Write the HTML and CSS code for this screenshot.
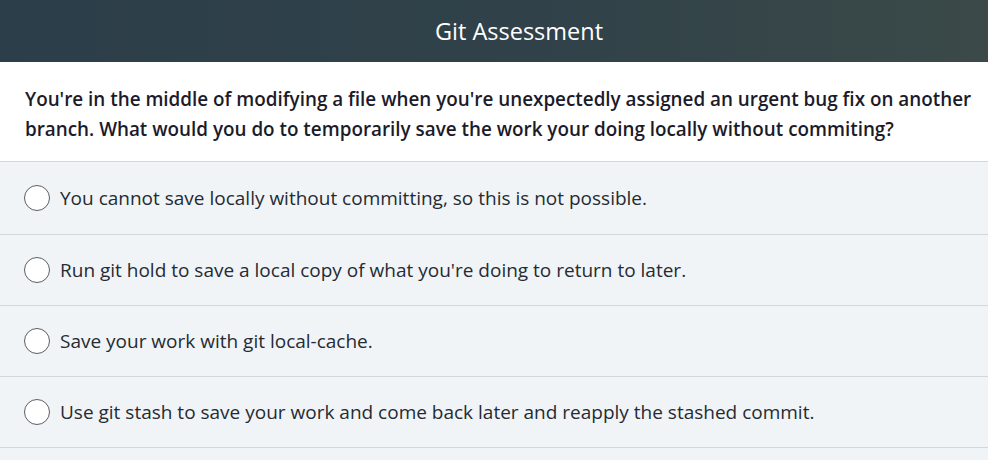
FILE: index.html
```html
<!DOCTYPE html>
<html>
<head>
	<meta charset="utf-8">
	<meta name="viewport" content="width=device-width, initial-scale=1">
	<title>Git Assessment</title>
	<link rel="stylesheet" href="styles.css">
</head>
<body>
	<header class="topbar">
		<h1>Git Assessment</h1>
	</header>

	<main class="quiz">
		<p class="question">You're in the middle of modifying a file when you're unexpectedly assigned an urgent bug fix on another branch. What would you do to temporarily save the work your doing locally without commiting?</p>

		<!-- answers, one label per row -->
		<ul class="answers">
			<li><label class="answer"><input type="radio" name="answer"><span class="dot"></span>You cannot save locally without committing, so this is not possible.</label></li>
			<li><label class="answer"><input type="radio" name="answer"><span class="dot"></span>Run git hold to save a local copy of what you're doing to return to later.</label></li>
			<li><label class="answer"><input type="radio" name="answer"><span class="dot"></span>Save your work with git local-cache.</label></li>
			<li><label class="answer"><input type="radio" name="answer"><span class="dot"></span>Use git stash to save your work and come back later and reapply the stashed commit.</label></li>
		</ul>
	</main>
</body>
</html>
```

FILE: styles.css
```css
* {
  box-sizing: border-box;
  padding: 0;
  margin: 0;
}
body {
  background: #f1f4f7;
  color: #212529;
  font-family: "Open Sans", "Noto Sans", sans-serif;
}

/* dark bar on top */
.topbar {
  height: 62px;
  display: flex;
  justify-content: center;
  align-items: center;
  padding-left: 50px;
  background: linear-gradient(90deg, #2c3e49, #314249 60%, #3b4a48);
  color: #fff;
}
.topbar h1 {
  font-size: 23.5px;
  font-weight: 400;
}

.question {
  background: #fff;
  padding: 22px 8px 17px 25px;
  font-size: 18.85px;
  line-height: 30px;
  font-weight: 600;
  color: #1b1b2a;
  border-bottom: 1px solid #d4d6d8;
}

.answers {
  list-style: none;
}
.answers li {
  border-bottom: 1px solid #d4d6d8;
}
.answers li:first-child .answer {
  height: 72px;
}
.answer {
  display: flex;
  align-items: center;
  gap: 10px;
  height: 70px;
  padding: 0 24px;
  font-size: 19px;
  color: #252b33;
  cursor: pointer;
}
.answer input {
  display: none;
}
/* hollow circle in place of the native radio */
.answer .dot {
  width: 26px;
  height: 26px;
  border: 1.5px solid #5a5e63;
  border-radius: 50%;
  background: #fff;
  flex: none;
}
.answer input:checked + .dot {
  border: 7px solid #2c3e49;
}
```
